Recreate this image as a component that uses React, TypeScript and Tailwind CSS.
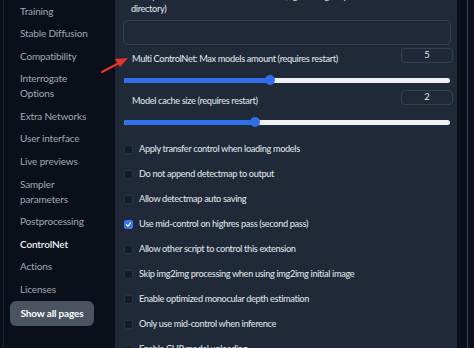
import React from 'react'

const navItems: { label: string[]; active?: boolean }[] = [
  { label: ['Training'] },
  { label: ['Stable Diffusion'] },
  { label: ['Compatibility'] },
  { label: ['Interrogate', 'Options'] },
  { label: ['Extra Networks'] },
  { label: ['User interface'] },
  { label: ['Live previews'] },
  { label: ['Sampler', 'parameters'] },
  { label: ['Postprocessing'] },
  { label: ['ControlNet'], active: true },
  { label: ['Actions'] },
  { label: ['Licenses'] },
]

const checks = [
  { label: 'Apply transfer control when loading models', on: false },
  { label: 'Do not append detectmap to output', on: false },
  { label: 'Allow detectmap auto saving', on: false },
  { label: 'Use mid-control on highres pass (second pass)', on: true },
  { label: 'Allow other script to control this extension', on: false },
  { label: 'Skip img2img processing when using img2img initial image', on: false },
  { label: 'Enable optimized monocular depth estimation', on: false },
  { label: 'Only use mid-control when inference', on: false },
  { label: 'Enable CLIP model unloading', on: false },
]

function Slider({ value }: { value: number }) {
  return (
    <div className="relative flex h-[10px] w-[326px] items-center">
      <div className="h-[5px] w-full overflow-hidden rounded-full bg-[#eef0f3]">
        <div className="h-full bg-[#2f6fe8]" style={{ width: `${value * 100}%` }} />
      </div>
      <div
        className="absolute top-1/2 h-[10px] w-[10px] -translate-x-1/2 -translate-y-1/2 rounded-full bg-[#2f6fe8]"
        style={{ left: `${value * 100}%` }}
      />
    </div>
  )
}

function NumberRow({ label, value }: { label: string; value: string }) {
  return (
    <div className="relative flex h-[15px] items-center">
      <span className="ml-[9px] mt-[6px] text-[9.2px] font-medium leading-[12px] tracking-[-0.35px] text-[#dde0e5]">{label}</span>
      <div className="absolute right-[-2px] top-0 flex h-[15px] w-[52px] items-center justify-center rounded-[4px] border border-[#354052] text-[9.5px] text-[#e5e7eb]">
        {value}
      </div>
    </div>
  )
}

export default function App() {
  return (
    <div
      className="relative flex h-[348px] w-[474px] overflow-hidden bg-[#0b0f19]"
      style={{ fontFamily: 'Lato, "Liberation Sans", sans-serif' }}
    >
      {/* sidebar */}
      <div className="relative w-[115px] shrink-0">
        <div className="absolute left-[3px] top-0 h-full w-px bg-[#1c2230]" />
        <div className="flex flex-col gap-[7.6px] pl-[20px] pt-[3.5px] text-[10px] leading-[15px] tracking-[-0.15px] text-[#a2a8b2]">
          {navItems.map((item) => (
            <div key={item.label.join(' ')} className={item.active ? 'font-semibold text-[#eceef1]' : ''}>
              {item.label.map((l) => (
                <div key={l}>{l}</div>
              ))}
            </div>
          ))}
        </div>
        <div className="ml-[10px] mt-[4px] flex h-[25px] w-[84px] items-center justify-center rounded-[6px] bg-[#4b5260] text-[10px] font-bold tracking-[-0.15px] text-white">
          Show all pages
        </div>
      </div>

      {/* settings panel */}
      <div className="w-[342px] shrink-0 bg-[#1f2937] pl-[8px]">
        <div className="-mt-[11px] ml-[8px] text-[9.2px] font-medium leading-[13px] tracking-[-0.35px] text-[#dde0e5]">
          <div>Extra path to scan for ControlNet models (e.g. training output</div>
          <div>directory)</div>
        </div>
        <div className="mt-[5px] h-[25px] w-[328px] rounded-[5px] border border-[#354052]" />

        <div className="mt-[3px] w-[328px]">
          <NumberRow label="Multi ControlNet: Max models amount (requires restart)" value="5" />
        </div>
        <div className="ml-[1px] mt-[12px]">
          <Slider value={0.447} />
        </div>

        <div className="mt-[5px] w-[328px]">
          <NumberRow label="Model cache size (requires restart)" value="2" />
        </div>
        <div className="ml-[1px] mt-[12px]">
          <Slider value={0.403} />
        </div>

        <div className="mt-[9.5px] flex flex-col">
          {checks.map((c) => (
            <div key={c.label} className="flex h-[25px] items-center gap-[6px] pl-[1px]">
              {c.on ? (
                <div className="flex h-[9px] w-[9px] items-center justify-center rounded-[2px] bg-[#3b76ea]">
                  <svg viewBox="0 0 10 10" className="h-[7px] w-[7px]">
                    <path d="M2 5.2 L4.2 7.3 L8 2.8" fill="none" stroke="white" strokeWidth="1.6" strokeLinecap="round" strokeLinejoin="round" />
                  </svg>
                </div>
              ) : (
                <div className="h-[9px] w-[9px] rounded-[2px] border border-[#2a3342] bg-[#141b29]" />
              )}
              <span className="text-[9.2px] font-medium leading-[12px] tracking-[-0.35px] text-[#dde0e5]">{c.label}</span>
            </div>
          ))}
        </div>
      </div>

      {/* right edge */}
      <div className="relative flex-1">
        <div className="absolute left-[10px] top-0 h-full w-px bg-[#3a4150]" />
      </div>

      {/* annotation arrow */}
      <svg className="pointer-events-none absolute left-0 top-0 h-[348px] w-[474px]" viewBox="0 0 474 348">
        <line x1="102" y1="72" x2="119" y2="63" stroke="#e8332f" strokeWidth="2" strokeLinecap="round" />
        <polygon points="128,58 115,59 120,67" fill="#e8332f" />
      </svg>
    </div>
  )
}
